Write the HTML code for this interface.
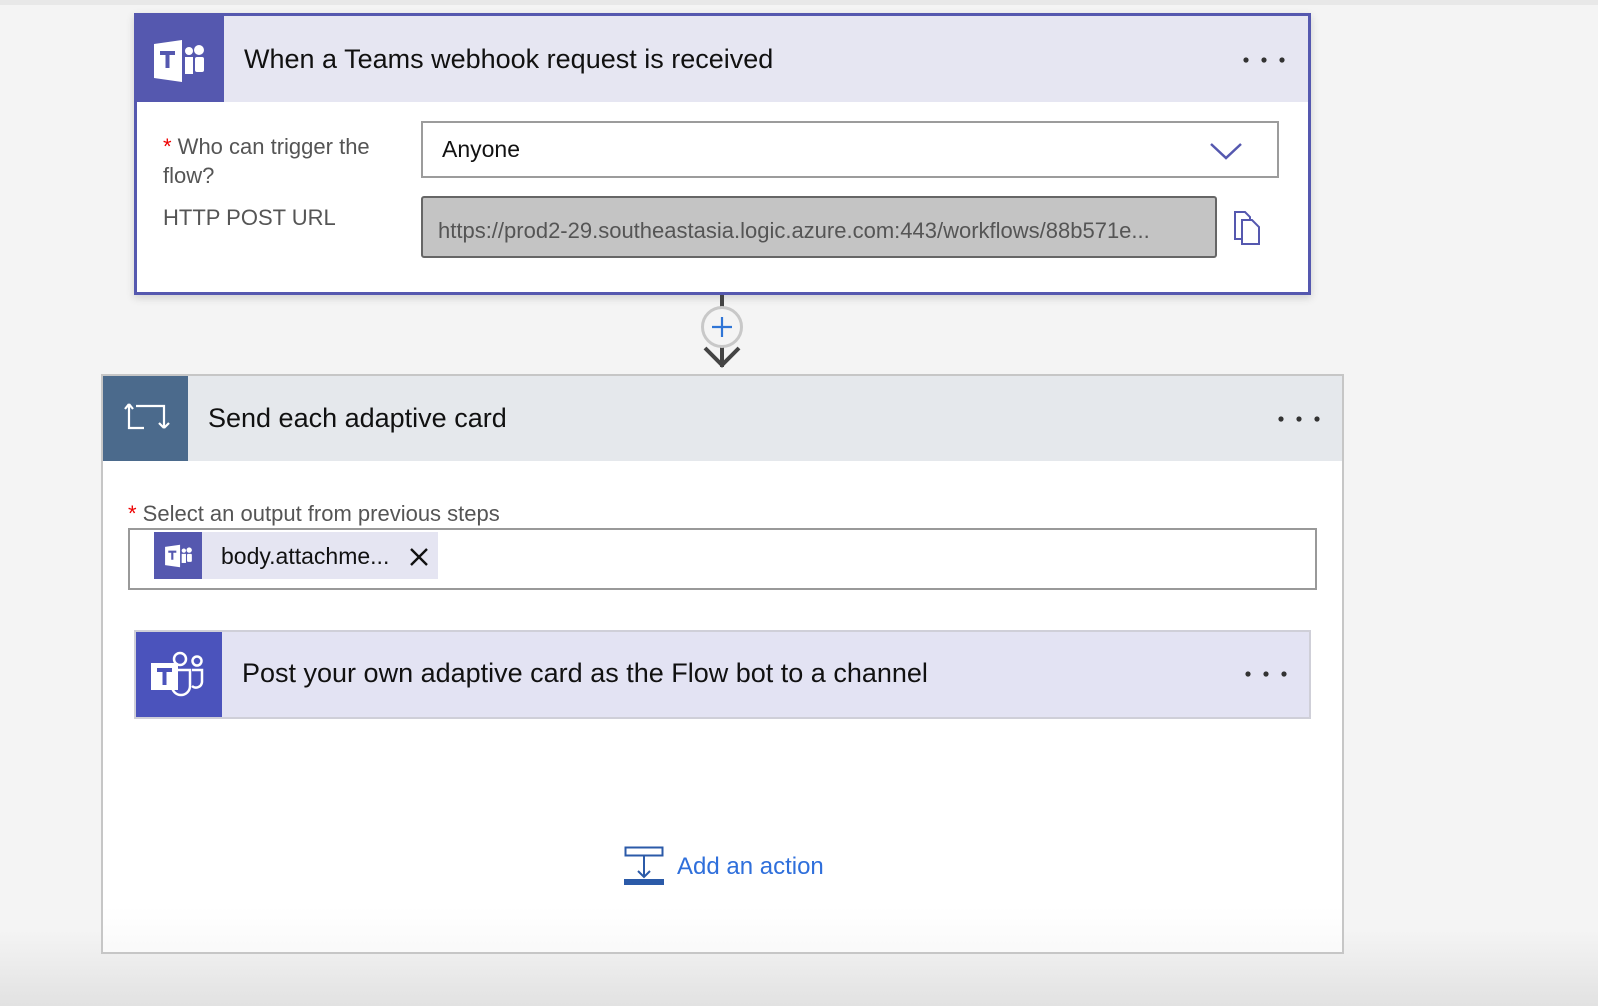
<!DOCTYPE html>
<html><head><meta charset="utf-8"><style>
*{box-sizing:border-box;margin:0;padding:0}
body{width:1598px;height:1006px;overflow:hidden;font-family:"Liberation Sans",sans-serif;background:linear-gradient(#f4f4f4 0,#f4f4f4 930px,#e2e2e2 1006px);position:relative}
.top{position:absolute;left:0;top:0;width:1598px;height:5px;background:#e8e8e8}
.a{position:absolute}
.t{position:absolute;white-space:nowrap}
</style></head><body>
<div class="top"></div>

<!-- card 1 -->
<div class="a" style="left:134px;top:13px;width:1177px;height:282px;border:3px solid #5558af;background:#fff;box-shadow:0 3px 8px rgba(0,0,0,.15)"></div>
<div class="a" style="left:137px;top:16px;width:1171px;height:86px;background:#e6e6f2"></div>
<div class="a" style="left:137px;top:16px;width:87px;height:86px;background:#5558af"></div>
<svg class="a" style="left:152px;top:38px" width="56" height="46" viewBox="0 0 56 46"><path d="M2 6 L30 2 L30 44 L2 40Z" fill="#fff"/><path d="M8 13h15v4h-5.5v13h-4V17H8z" fill="#5558af"/><circle cx="47" cy="12" r="5" fill="#fff"/><rect x="33" y="19" width="8" height="17" fill="#fff"/><rect x="43" y="19" width="9" height="15" rx="2" fill="#fff"/><circle cx="37" cy="13" r="4" fill="#fff"/></svg>
<div class="t" style="left:244px;top:44px;font-size:27px;color:#111">When a Teams webhook request is received</div>
<svg class="a" style="left:1240px;top:54px" width="50" height="12"><circle cx="6" cy="6" r="2.6" fill="#333"/><circle cx="24" cy="6" r="2.6" fill="#333"/><circle cx="42" cy="6" r="2.6" fill="#333"/></svg>
<div class="t" style="left:163px;top:132px;font-size:22px;color:#555;line-height:29px;white-space:normal;width:240px"><span style="color:#e00">*</span> Who can trigger the flow?</div>
<div class="t" style="left:163px;top:205px;font-size:22px;color:#555">HTTP POST URL</div>
<div class="a" style="left:421px;top:121px;width:858px;height:57px;border:2px solid #9c9c9c;background:#fff"></div>
<div class="t" style="left:442px;top:136px;font-size:23px;color:#111">Anyone</div>
<svg class="a" style="left:1208px;top:139px" width="36" height="24"><path d="M3 5 L18 19 L33 5" stroke="#5558af" stroke-width="2.5" fill="none"/></svg>
<div class="a" style="left:421px;top:196px;width:796px;height:62px;border:2px solid #666;border-radius:3px;background:#c4c4c4"></div>
<div class="t" style="left:438px;top:218px;font-size:22px;color:#555">https://prod2-29.southeastasia.logic.azure.com:443/workflows/88b571e...</div>
<svg class="a" style="left:1232px;top:210px" width="34" height="36" viewBox="0 0 34 36"><path d="M3 2h10l5 5v22H3z" fill="none" stroke="#5558af" stroke-width="2"/><path d="M10 10h10l7 7v17H10z" fill="#fff" stroke="#5558af" stroke-width="2"/></svg>

<!-- connector -->
<div class="a" style="left:720px;top:295px;width:4px;height:72px;background:#444"></div>
<div class="a" style="left:701px;top:306px;width:42px;height:42px;border-radius:50%;border:3px solid #c8c8c8;background:#f4f4f4"></div>
<svg class="a" style="left:707px;top:312px" width="30" height="30"><path d="M15 5v20M5 15h20" stroke="#2f75d6" stroke-width="2.2"/></svg>
<svg class="a" style="left:702px;top:345px" width="40" height="30"><path d="M3 3 L20 20 L37 3" stroke="#444" stroke-width="4" fill="none"/></svg>

<!-- card 2 -->
<div class="a" style="left:101px;top:374px;width:1243px;height:580px;border:2px solid #c6c6c6;background:linear-gradient(#fff 0,#fff 530px,#f9f9f9 580px)"></div>
<div class="a" style="left:103px;top:376px;width:1239px;height:85px;background:#e5e8ec"></div>
<div class="a" style="left:103px;top:376px;width:85px;height:85px;background:#4b6a8c"></div>
<svg class="a" style="left:124px;top:400px" width="46" height="36"><path d="M5 10v18h15M5 4 L1 9M5 4 L9 9M5 4v6" stroke="#fff" stroke-width="2.2" fill="none"/><path d="M12 6h28v22M40 28 L35 23M40 28 L45 23" stroke="#fff" stroke-width="2.2" fill="none"/></svg>
<div class="t" style="left:208px;top:403px;font-size:27px;color:#111">Send each adaptive card</div>
<svg class="a" style="left:1275px;top:413px" width="50" height="12"><circle cx="6" cy="6" r="2.6" fill="#333"/><circle cx="24" cy="6" r="2.6" fill="#333"/><circle cx="42" cy="6" r="2.6" fill="#333"/></svg>
<div class="t" style="left:128px;top:501px;font-size:22px;color:#555"><span style="color:#e00">*</span> Select an output from previous steps</div>
<div class="a" style="left:128px;top:528px;width:1189px;height:62px;border:2px solid #999;background:#fff"></div>
<div class="a" style="left:154px;top:532px;width:284px;height:47px;background:#e5e5f2"></div>
<div class="a" style="left:154px;top:532px;width:48px;height:47px;background:#5558af"></div>
<svg class="a" style="left:164px;top:543px" width="30" height="26" viewBox="0 0 56 46"><path d="M2 6 L30 2 L30 44 L2 40Z" fill="#fff"/><path d="M8 13h15v4h-5.5v13h-4V17H8z" fill="#5558af"/><circle cx="47" cy="12" r="5" fill="#fff"/><rect x="33" y="19" width="8" height="17" fill="#fff"/><rect x="43" y="19" width="9" height="15" rx="2" fill="#fff"/><circle cx="37" cy="13" r="4" fill="#fff"/></svg>
<div class="t" style="left:221px;top:543px;font-size:23px;color:#111">body.attachme...</div>
<svg class="a" style="left:408px;top:546px" width="22" height="22"><path d="M3 3L19 19M19 3L3 19" stroke="#111" stroke-width="2.4"/></svg>

<div class="a" style="left:134px;top:630px;width:1177px;height:89px;border:2px solid #cfcfd8;background:#e3e3f3"></div>
<div class="a" style="left:136px;top:632px;width:86px;height:85px;background:#4b53bc"></div>
<svg class="a" style="left:150px;top:650px" width="58" height="50" viewBox="0 0 58 50"><circle cx="30" cy="9" r="6" fill="none" stroke="#fff" stroke-width="2.5"/><circle cx="47" cy="11" r="4.5" fill="none" stroke="#fff" stroke-width="2.5"/><path d="M22 20h18v16a9 9 0 0 1-18 0z" fill="none" stroke="#fff" stroke-width="2.5"/><path d="M42 20h10v12a6 6 0 0 1-10 4" fill="none" stroke="#fff" stroke-width="2.5"/><rect x="1" y="13" width="27" height="27" fill="#fff"/><path d="M7 18h15v4h-5.5v13h-4V22H7z" fill="#4b53bc"/></svg>
<div class="t" style="left:242px;top:658px;font-size:27px;color:#111">Post your own adaptive card as the Flow bot to a channel</div>
<svg class="a" style="left:1242px;top:668px" width="50" height="12"><circle cx="6" cy="6" r="2.6" fill="#333"/><circle cx="24" cy="6" r="2.6" fill="#333"/><circle cx="42" cy="6" r="2.6" fill="#333"/></svg>

<svg class="a" style="left:624px;top:846px" width="40" height="40"><rect x="1.5" y="1.5" width="37" height="8" fill="none" stroke="#2b5aa8" stroke-width="2"/><path d="M20 10v21M14 25l6 6 6-6" stroke="#2b5aa8" stroke-width="2" fill="none"/><rect x="0" y="33" width="40" height="6" fill="#2b5aa8"/></svg>
<div class="t" style="left:677px;top:853px;font-size:24px;color:#2f6fdb">Add an action</div>
</body></html>
